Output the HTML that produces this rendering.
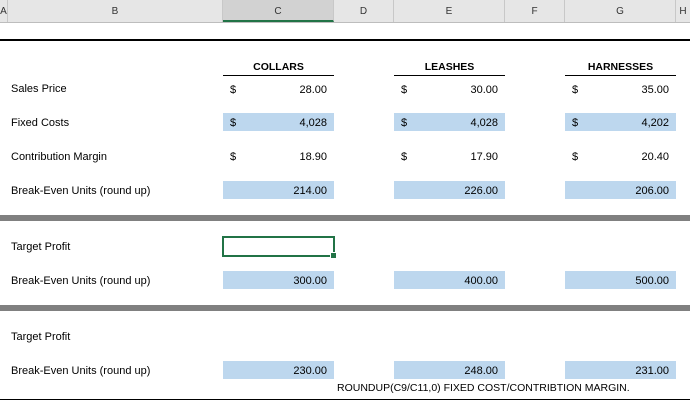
<!DOCTYPE html>
<html><head><style>
body{margin:0;width:690px;height:407px;background:#fff;position:relative;overflow:hidden;font-family:"Liberation Sans",sans-serif;font-size:11px;color:#000}
div{position:absolute}
.hdr{top:0;left:0;width:690px;height:22px;background:#e6e6e6;border-bottom:1px solid #bdbdbd}
.col{top:0;height:22px;text-align:center;line-height:24px;font-size:10px;color:#333;border-right:1px solid #c8c8c8;box-sizing:border-box}
.lbl{left:11px}
.b{background:#bdd7ee;height:18px}
.v{text-align:right;width:104px;line-height:20px}
.d{line-height:20px}
.h{font-weight:bold;font-size:10.5px;text-align:center;width:111px;border-bottom:1px solid #000;height:14px;top:61px}
.g{left:0;width:690px;height:6px;background:#808080}
</style></head><body>
<div class="hdr"></div>
<div class="col" style="left:0;width:8px">A</div>
<div class="col" style="left:8px;width:215px">B</div>
<div class="col" style="left:223px;width:111px;background:#d2d2d2;border-bottom:2px solid #217346;height:22px">C</div>
<div class="col" style="left:334px;width:60px">D</div>
<div class="col" style="left:394px;width:111px">E</div>
<div class="col" style="left:505px;width:60px">F</div>
<div class="col" style="left:565px;width:111px">G</div>
<div class="col" style="left:676px;width:14px;border:none">H</div>

<div style="left:0;top:39px;width:690px;height:2px;background:#000"></div>

<div class="h" style="left:223px">COLLARS</div>
<div class="h" style="left:394px">LEASHES</div>
<div class="h" style="left:565px">HARNESSES</div>

<div class="lbl" style="top:83px">Sales Price</div>
<div class="lbl" style="top:117px">Fixed Costs</div>
<div class="lbl" style="top:151px">Contribution Margin</div>
<div class="lbl" style="top:185px">Break-Even Units (round up)</div>

<div class="d" style="left:230px;top:80px">$</div><div class="v" style="left:223px;top:80px">28.00</div>
<div class="d" style="left:401px;top:80px">$</div><div class="v" style="left:394px;top:80px">30.00</div>
<div class="d" style="left:572px;top:80px">$</div><div class="v" style="left:565px;top:80px">35.00</div>

<div class="b" style="left:223px;top:113px;width:111px"></div>
<div class="b" style="left:394px;top:113px;width:111px"></div>
<div class="b" style="left:565px;top:113px;width:111px"></div>
<div class="d" style="left:230px;top:113px">$</div><div class="v" style="left:223px;top:113px">4,028</div>
<div class="d" style="left:401px;top:113px">$</div><div class="v" style="left:394px;top:113px">4,028</div>
<div class="d" style="left:572px;top:113px">$</div><div class="v" style="left:565px;top:113px">4,202</div>

<div class="d" style="left:230px;top:147px">$</div><div class="v" style="left:223px;top:147px">18.90</div>
<div class="d" style="left:401px;top:147px">$</div><div class="v" style="left:394px;top:147px">17.90</div>
<div class="d" style="left:572px;top:147px">$</div><div class="v" style="left:565px;top:147px">20.40</div>

<div class="b" style="left:223px;top:181px;width:111px"></div>
<div class="b" style="left:394px;top:181px;width:111px"></div>
<div class="b" style="left:565px;top:181px;width:111px"></div>
<div class="v" style="left:223px;top:181px">214.00</div>
<div class="v" style="left:394px;top:181px">226.00</div>
<div class="v" style="left:565px;top:181px">206.00</div>

<div class="g" style="top:215px"></div>

<div class="lbl" style="top:241px">Target Profit</div>
<div style="left:222px;top:236px;width:109px;height:17px;border:2px solid #217346"></div>
<div style="left:330px;top:252px;width:5px;height:5px;background:#217346;border:1px solid #fff"></div>

<div class="lbl" style="top:275px">Break-Even Units (round up)</div>
<div class="b" style="left:223px;top:271px;width:111px"></div>
<div class="b" style="left:394px;top:271px;width:111px"></div>
<div class="b" style="left:565px;top:271px;width:111px"></div>
<div class="v" style="left:223px;top:271px">300.00</div>
<div class="v" style="left:394px;top:271px">400.00</div>
<div class="v" style="left:565px;top:271px">500.00</div>

<div class="g" style="top:305px"></div>

<div class="lbl" style="top:331px">Target Profit</div>
<div class="lbl" style="top:365px">Break-Even Units (round up)</div>
<div class="b" style="left:223px;top:361px;width:111px"></div>
<div class="b" style="left:394px;top:361px;width:111px"></div>
<div class="b" style="left:565px;top:361px;width:111px"></div>
<div class="v" style="left:223px;top:361px">230.00</div>
<div class="v" style="left:394px;top:361px">248.00</div>
<div class="v" style="left:565px;top:361px">231.00</div>
<div style="left:337px;top:382px;font-size:10.5px">ROUNDUP(C9/C11,0) FIXED COST/CONTRIBTION MARGIN.</div>

<div style="left:0;top:399px;width:690px;height:1px;background:#000"></div>
</body></html>
